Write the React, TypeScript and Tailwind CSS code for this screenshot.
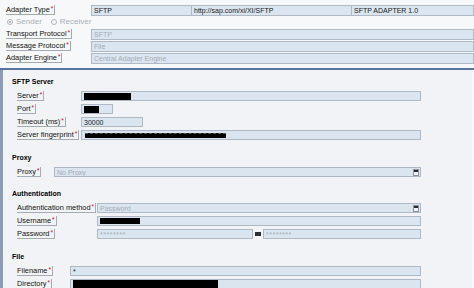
import React from 'react';

// SAP PI communication channel - SFTP sender adapter settings

const Req = () => <span className="text-[#d0021b] text-[6.5px] leading-none ml-[1px] self-start mt-[1px]">*</span>;

const Label = ({ text, width }: { text: string; width: number }) => (
    <div className="shrink-0" style={{ width }}>
        <span className="inline-flex items-end h-[10px] pr-[1px] border-b border-r border-[#a3abb5] leading-[9px] whitespace-nowrap text-[7.4px] text-[#111]">
            {text}
            <Req />
        </span>
    </div>
);

const Field = ({ children, className = '', muted = false }: { children?: React.ReactNode; className?: string; muted?: boolean }) => (
    <div className={`relative h-[10px] border border-[#afb9c5] bg-[#dbe5f0] pl-[2px] flex items-center overflow-hidden whitespace-nowrap leading-none ${muted ? 'text-[#a4acb6]' : 'text-[#1a1a1a]'} ${className}`}>
        {children}
    </div>
);

const DropIcon = () => (
    <svg width="6" height="7" viewBox="0 0 6 7" className="absolute right-[1px] top-[1px]">
        <rect x="0.5" y="0.5" width="5" height="6" fill="#eef1f5" stroke="#8a929c" strokeWidth="1" />
        <rect x="1" y="1" width="4" height="2" fill="#2a2a2a" />
    </svg>
);

const Redact = ({ w, h = 7 }: { w: number; h?: number }) => (
    <div className="bg-black shrink-0" style={{ width: w, height: h }} />
);

const Row = ({ label, lw, children }: { label: string; lw: number; children: React.ReactNode }) => (
    <div className="flex items-start h-[13px]">
        <Label text={label} width={lw} />
        {children}
    </div>
);

const Header = ({ text, mt }: { text: string; mt: number }) => (
    <div className="h-[10px] flex items-center font-bold text-[7px] text-black -ml-[5px]" style={{ marginTop: mt }}>
        {text}
    </div>
);

export default function App() {
    return (
        <div className="w-[474px] h-[288px] overflow-hidden bg-[#f7f8fa] font-['Liberation_Sans',Arial,sans-serif] text-[7px] text-[#1a1a1a]">
            <div className="h-[68px] pt-[4px] pl-[6px] flex flex-col">
                <div className="flex items-center h-[12px]">
                    <Label text="Adapter Type" width={85} />
                    <Field className="w-[101px] h-[11px]">SFTP</Field>
                    <Field className="w-[160px] h-[11px] border-l-0">http://sap.com/xi/XI/SFTP</Field>
                    <Field className="flex-1 h-[11px] border-l-0">SFTP ADAPTER 1.0</Field>
                </div>
                <div className="flex items-center h-[12px] text-[#a9b0b8] text-[8px] gap-[3px] pl-[1px]">
                    <span className="w-[6px] h-[6px] rounded-full border border-[#b0b6bd] flex items-center justify-center">
                        <span className="w-[2px] h-[2px] rounded-full bg-[#a0a6ad]" />
                    </span>
                    <span className="mr-[6px]">Sender</span>
                    <span className="w-[6px] h-[6px] rounded-full border border-[#b0b6bd]" />
                    <span>Receiver</span>
                </div>
                {[
                    ['Transport Protocol', 'SFTP'],
                    ['Message Protocol', 'File'],
                    ['Adapter Engine', 'Central Adapter Engine'],
                ].map(([l, v]) => (
                    <div key={l} className="flex items-center h-[12px]">
                        <Label text={l} width={85} />
                        <Field muted className="flex-1 h-[11px]">{v}</Field>
                    </div>
                ))}
            </div>

            <div className="h-[2px] bg-[#55759f]" />

            <div className="flex h-[218px]">
                <div className="w-[472px] h-full bg-[#f1f3f6] border-l-[3px] border-[#8c9cb4] pl-[14px] flex flex-col">
                    <div className="w-[404px] flex flex-col">
                        <Header text="SFTP Server" mt={7} />
                        <div className="mt-[4px] flex flex-col">
                            <Row label="Server" lw={64}>
                                <Field className="flex-1 pl-0"><Redact w={47} /></Field>
                            </Row>
                            <Row label="Port" lw={64}>
                                <Field className="w-[32px] pl-0"><Redact w={15} /></Field>
                            </Row>
                            <Row label="Timeout (ms)" lw={64}>
                                <Field className="w-[62px]">30000</Field>
                            </Row>
                            <Row label="Server fingerprint" lw={64}>
                                <Field className="flex-1 pl-[3px]">
                                    <div className="w-[141px] h-[5px] bg-black border-t border-dashed border-[#555]" />
                                </Field>
                            </Row>
                        </div>

                        <Header text="Proxy" mt={10} />
                        <div className="mt-[4px]">
                            <Row label="Proxy" lw={37}>
                                <Field muted className="flex-1">No Proxy<DropIcon /></Field>
                            </Row>
                        </div>

                        <Header text="Authentication" mt={9} />
                        <div className="mt-[4px] flex flex-col">
                            <Row label="Authentication method" lw={80}>
                                <Field muted className="flex-1">Password<DropIcon /></Field>
                            </Row>
                            <Row label="Username" lw={80}>
                                <Field className="flex-1 pl-0"><Redact w={40} h={6} /></Field>
                            </Row>
                            <Row label="Password" lw={80}>
                                <Field muted className="w-[156px] tracking-[0.5px]">********</Field>
                                <div className="w-[10px] h-[10px] flex items-center justify-center">
                                    <div className="w-[6px] h-[4px] bg-[#2b2f36]" />
                                </div>
                                <Field muted className="flex-1 tracking-[0.5px]">********</Field>
                            </Row>
                        </div>

                        <Header text="File" mt={10} />
                        <div className="mt-[4px] flex flex-col">
                            <Row label="Filename" lw={53}>
                                <Field className="flex-1">*</Field>
                            </Row>
                            <Row label="Directory" lw={53}>
                                <Field className="flex-1 pl-0 items-end"><Redact w={145} h={8} /></Field>
                            </Row>
                        </div>
                    </div>
                </div>
                <div className="flex-1 bg-[#f8f9fb]" />
            </div>
        </div>
    );
}
